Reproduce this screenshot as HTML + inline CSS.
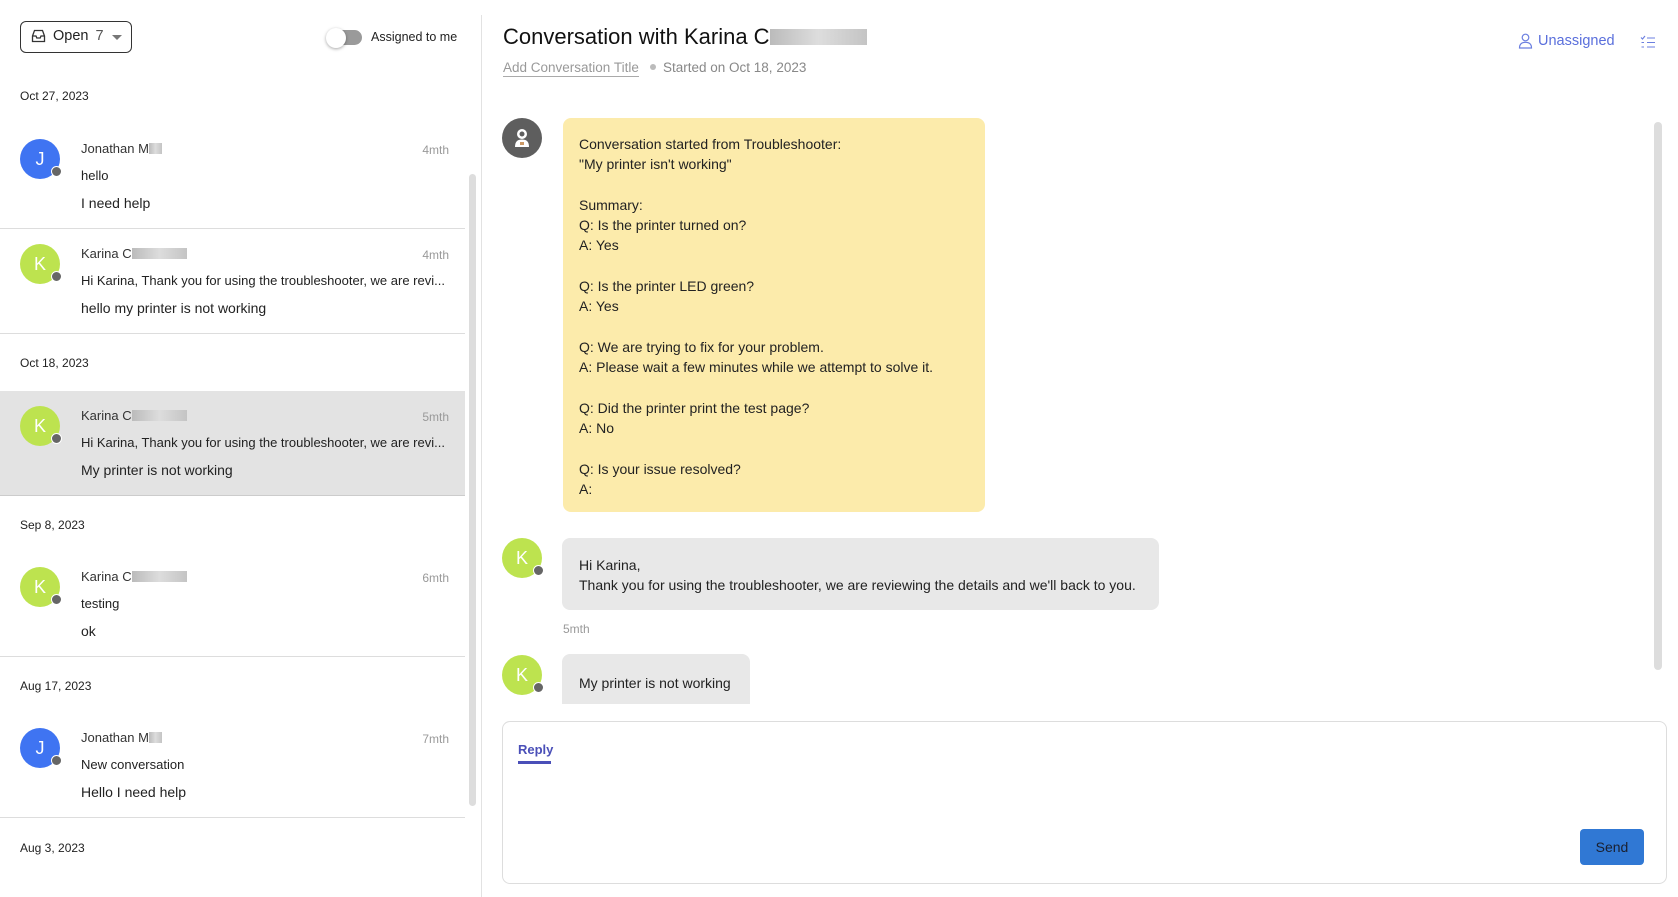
<!DOCTYPE html>
<html><head><meta charset="utf-8"><style>
*{box-sizing:border-box;margin:0;padding:0}
body{width:1678px;height:897px;overflow:hidden;background:#fff;font-family:"Liberation Sans",sans-serif;color:#222;position:relative}
.a{position:absolute}
.date{position:absolute;left:20px;font-size:12px;color:#222}
.item{position:absolute;left:0;width:465px;height:105px;border-bottom:1px solid #ddd}
.item.sel{background:#e3e3e3;border-bottom:1px solid #ccc}
.av{position:absolute;width:40px;height:40px;border-radius:50%;color:#fff;font-size:18px;text-align:center;line-height:40px}
.av:after{content:"";position:absolute;right:-2px;bottom:2px;width:9px;height:9px;border-radius:50%;background:#666;border:1.5px solid #fff}
.item .av{left:20px;top:15px}
.nm{position:absolute;left:81px;top:17px;font-size:13px;color:#333}
.blur{display:inline-block;height:11px;background:linear-gradient(90deg,#bbb,#ddd,#c4c4c4);vertical-align:-1px}
.tm{position:absolute;right:16px;top:19px;font-size:12px;color:#999}
.pv{position:absolute;left:81px;top:44px;font-size:13px;color:#222;white-space:nowrap}
.ls{position:absolute;left:81px;top:71px;font-size:14px;color:#222}
.bb{position:absolute;font-size:14px;line-height:20.3px;color:#222}
</style></head><body>
<!-- sidebar -->
<div class="a" style="left:20px;top:21px;width:112px;height:32px;border:1.5px solid #333;border-radius:6px"></div>
<svg class="a" style="left:31px;top:29px" width="15" height="14" viewBox="0 0 15 14"><path d="M1.5 7 L3.5 1.5 H11.5 L13.5 7 V12.5 H1.5 Z M1.5 7 H5 L5.8 9 H9.2 L10 7 H13.5" fill="none" stroke="#333" stroke-width="1.3"/></svg>
<div class="a" style="left:53px;top:28px;font-size:14.5px;color:#222">Open <span style="color:#555;margin-left:3px">7</span></div>
<div class="a" style="left:112px;top:35px;width:0;height:0;border-left:5px solid transparent;border-right:5px solid transparent;border-top:5px solid #777"></div>
<div class="a" style="left:328px;top:30px;width:34px;height:15px;border-radius:8px;background:#9a9a9a"></div>
<div class="a" style="left:326px;top:28px;width:20px;height:20px;border-radius:50%;background:#fff;box-shadow:0 1px 3px rgba(0,0,0,.35)"></div>
<div class="a" style="left:371px;top:30px;font-size:12.5px;color:#222">Assigned to me</div>
<div class="a" style="left:481px;top:15px;width:1px;height:882px;background:#e2e2e2"></div>
<div class="a" style="left:469px;top:174px;width:7px;height:632px;border-radius:4px;background:#ddd"></div>

<div class="date" style="top:89px">Oct 27, 2023</div>
<div class="item" style="top:124px"><div class="av" style="background:#3f74f2">J</div><div class="nm">Jonathan M<span class="blur" style="width:13px"></span></div><div class="tm">4mth</div><div class="pv">hello</div><div class="ls">I need help</div></div>
<div class="item" style="top:229px"><div class="av" style="background:#bde34f">K</div><div class="nm">Karina C<span class="blur" style="width:55px"></span></div><div class="tm">4mth</div><div class="pv">Hi Karina, Thank you for using the troubleshooter, we are revi...</div><div class="ls">hello my printer is not working</div></div>
<div class="date" style="top:356px">Oct 18, 2023</div>
<div class="item sel" style="top:391px"><div class="av" style="background:#bde34f">K</div><div class="nm">Karina C<span class="blur" style="width:55px"></span></div><div class="tm">5mth</div><div class="pv">Hi Karina, Thank you for using the troubleshooter, we are revi...</div><div class="ls">My printer is not working</div></div>
<div class="date" style="top:518px">Sep 8, 2023</div>
<div class="item" style="top:552px"><div class="av" style="background:#bde34f">K</div><div class="nm">Karina C<span class="blur" style="width:55px"></span></div><div class="tm">6mth</div><div class="pv">testing</div><div class="ls">ok</div></div>
<div class="date" style="top:679px">Aug 17, 2023</div>
<div class="item" style="top:713px"><div class="av" style="background:#3f74f2">J</div><div class="nm">Jonathan M<span class="blur" style="width:13px"></span></div><div class="tm">7mth</div><div class="pv">New conversation</div><div class="ls">Hello I need help</div></div>
<div class="date" style="top:841px">Aug 3, 2023</div>

<!-- main header -->
<div class="a" style="left:503px;top:24px;font-size:22px;color:#111">Conversation with Karina C<span class="blur" style="width:97px;height:16px"></span></div>
<div class="a" style="left:503px;top:60px;font-size:13.5px;color:#999;border-bottom:1px solid #aaa;line-height:16px">Add Conversation Title</div>
<div class="a" style="left:650px;top:64px;width:6px;height:6px;border-radius:50%;background:#bbb"></div>
<div class="a" style="left:663px;top:60px;font-size:13.5px;color:#888">Started on Oct 18, 2023</div>
<svg class="a" style="left:1518px;top:33px" width="15" height="16" viewBox="0 0 15 16"><circle cx="7.5" cy="4.5" r="3.3" fill="none" stroke="#6b7fe0" stroke-width="1.2"/><path d="M1.5 15 C1.5 10.5 4 9.3 7.5 9.3 S13.5 10.5 13.5 15 Z" fill="none" stroke="#6b7fe0" stroke-width="1.2"/></svg>
<div class="a" style="left:1538px;top:33px;font-size:14.5px;color:#5a6fdc">Unassigned</div>
<svg class="a" style="left:1640px;top:35px" width="16" height="14" viewBox="0 0 16 14"><path d="M1 2.5 L2.5 4 L5 1 M7 3 H15 M7 7.5 H15 M7 12 H15 M1.5 7.5 H4 M1.5 12 H4" fill="none" stroke="#6b7fe0" stroke-width="1.1"/></svg>
<div class="a" style="left:1654px;top:122px;width:8px;height:548px;border-radius:4px;background:#ddd"></div>

<!-- bot message -->
<div class="a" style="left:502px;top:118px;width:40px;height:40px;border-radius:50%;background:#5e5e5e"></div>
<svg class="a" style="left:512px;top:127px" width="20" height="22" viewBox="0 0 20 22"><circle cx="10" cy="7" r="5" fill="#fff"/><circle cx="10" cy="7" r="2.5" fill="#5e5e5e"/><path d="M3 20 C3 14 6 12.5 10 12.5 S17 14 17 20 Z" fill="#fff"/><rect x="8" y="15" width="4" height="3" fill="#c96"/></svg>
<div class="a" style="left:563px;top:118px;width:422px;height:394px;border-radius:8px;background:#fcebab"></div>
<div class="bb" style="left:579px;top:134px">Conversation started from Troubleshooter:<br>"My printer isn't working"<br><br>Summary:<br>Q: Is the printer turned on?<br>A: Yes<br><br>Q: Is the printer LED green?<br>A: Yes<br><br>Q: We are trying to fix for your problem.<br>A: Please wait a few minutes while we attempt to solve it.<br><br>Q: Did the printer print the test page?<br>A: No<br><br>Q: Is your issue resolved?<br>A:</div>

<div class="av" style="left:502px;top:538px;background:#bde34f"></div>
<div class="a" style="left:502px;top:538px;width:40px;line-height:40px;text-align:center;color:#fff;font-size:18px">K</div>
<div class="a" style="left:562px;top:538px;width:597px;height:72px;border-radius:8px;background:#e8e8e8"></div>
<div class="bb" style="left:579px;top:555px">Hi Karina,<br>Thank you for using the troubleshooter, we are reviewing the details and we'll back to you.</div>
<div class="a" style="left:563px;top:622px;font-size:12px;color:#999">5mth</div>

<div class="av" style="left:502px;top:655px;background:#bde34f">K</div>
<div class="a" style="left:562px;top:654px;width:188px;height:50px;border-radius:8px 8px 0 0;background:#e8e8e8"></div>
<div class="bb" style="left:579px;top:673px">My printer is not working</div>
<div class="a" style="left:490px;top:704px;width:1188px;height:5px;background:#fff"></div>

<!-- reply -->
<div class="a" style="left:502px;top:721px;width:1165px;height:163px;border:1.5px solid #ddd;border-radius:8px"></div>
<div class="a" style="left:518px;top:742px;font-size:13px;font-weight:bold;color:#4a4fb8">Reply</div>
<div class="a" style="left:518px;top:761px;width:33px;height:3px;background:#4a4fb8"></div>
<div class="a" style="left:1580px;top:829px;width:64px;height:36px;border-radius:4px;background:#3078d4;color:#1a2030;font-size:14px;text-align:center;line-height:36px">Send</div>
</body></html>
